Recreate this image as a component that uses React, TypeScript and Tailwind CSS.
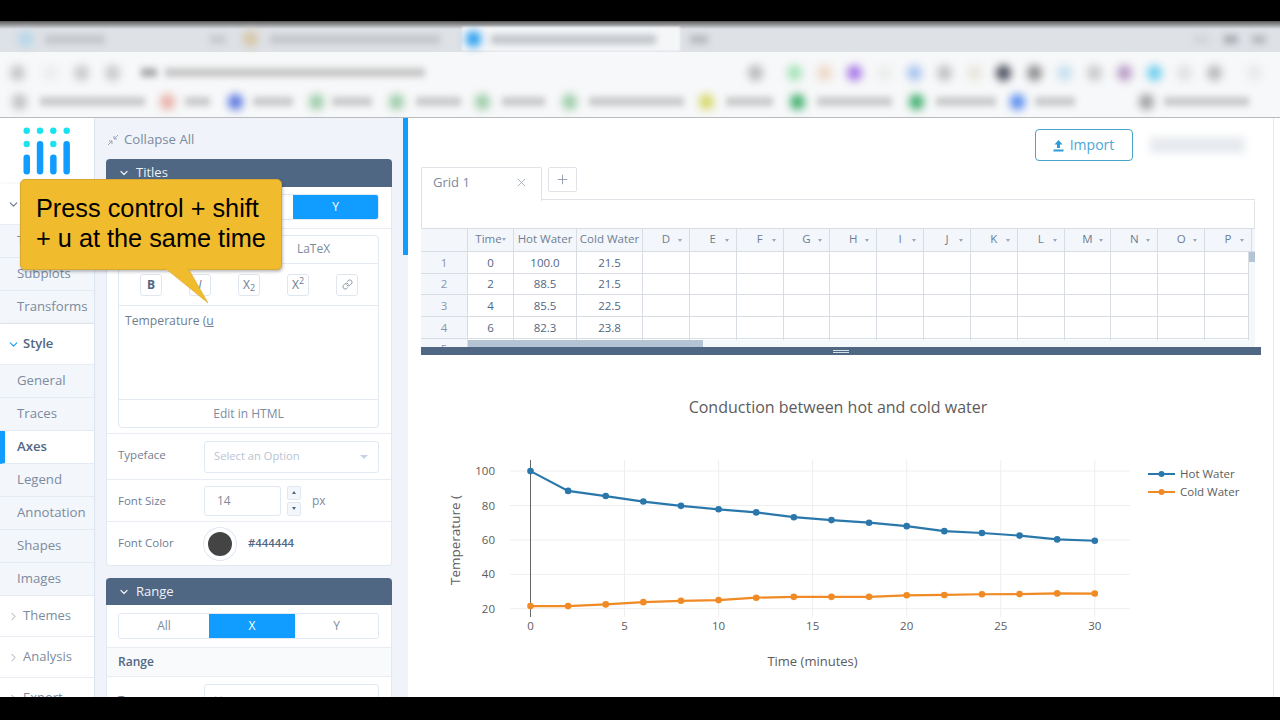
import React from "react";
import { ChevronDown, ChevronRight, Link as LinkIcon, X, Plus } from "lucide-react";

const Ic = ({ c }: { c: string }) => <div className={"h-[16px] w-[15px] shrink-0 rounded-full blur-[4px] " + c} />;
const Bar = ({ c }: { c: string }) => <div className={"h-[9px] shrink-0 blur-[3px] " + c} />;

function BrowserChrome() {
  return (
    <div className="relative flex h-[97px] shrink-0 flex-col border-b border-[#b9bbbe] bg-[#f7f8f9]">
      <div className="absolute left-0 right-0 top-0 h-[8px] bg-gradient-to-b from-[#5a5a5a] to-[#dee1e6]" />
      <div className="flex h-[31px] shrink-0 items-center bg-[#dee1e6] pt-[5px]">
        <Ic c="ml-[18px] bg-[#b5d6ea]" />
        <Bar c="ml-[12px] w-[60px] bg-[#c4c7cb]" />
        <Bar c="ml-[105px] w-[16px] bg-[#c8cbcf]" />
        <Ic c="ml-[17px] bg-[#d6c6a6]" />
        <Bar c="ml-[12px] w-[170px] bg-[#c4c7cb]" />
        <div className="ml-[22px] flex h-[24px] w-[218px] shrink-0 items-center bg-[#f4f6f8] blur-[1px]">
          <Ic c="ml-[4px] bg-[#1e9bf0]" />
          <Bar c="ml-[10px] w-[165px] bg-[#bfc2c6]" />
        </div>
        <Bar c="ml-[10px] w-[18px] bg-[#b9bcc0]" />
        <div className="flex-1" />
        <Bar c="w-[14px] bg-[#d2d5d9]" />
        <Bar c="ml-[16px] w-[14px] bg-[#adb1b5]" />
        <Bar c="ml-[14px] mr-[14px] w-[14px] bg-[#b9bcc0]" />
      </div>
      <div className="flex h-[34px] shrink-0 items-center pt-[7px]">
        <Ic c="ml-[10px] bg-[#c4c6c8]" />
        <Ic c="ml-[18px] bg-[#eceded]" />
        <Ic c="ml-[16px] bg-[#c8c9ca]" />
        <Ic c="ml-[16px] bg-[#c8c9ca]" />
        <Bar c="ml-[21px] w-[16px] bg-[#a9abad]" />
        <Bar c="ml-[8px] w-[260px] bg-[#c6c7c8]" />
        <div className="flex-1" />
        <Ic c="bg-[#b8b9ba]" />
        <Ic c="ml-[24px] bg-[#a5e3b8]" />
        <Ic c="ml-[15px] bg-[#ecd8c8]" />
        <Ic c="ml-[15px] bg-[#a878e8]" />
        <Ic c="ml-[15px] bg-[#ececec]" />
        <Ic c="ml-[15px] bg-[#a8c4ee]" />
        <Ic c="ml-[15px] bg-[#c0c1c2]" />
        <Ic c="ml-[15px] bg-[#e8e5dc]" />
        <Ic c="ml-[14px] bg-[#4a4f5e]" />
        <Ic c="ml-[16px] bg-[#8c8d8e]" />
        <Ic c="ml-[15px] bg-[#c5e0f0]" />
        <Ic c="ml-[15px] bg-[#c8c9ca]" />
        <Ic c="ml-[15px] bg-[#b89cc8]" />
        <Ic c="ml-[15px] bg-[#70d0ee]" />
        <Ic c="ml-[15px] bg-[#e0e1e2]" />
        <Ic c="ml-[15px] bg-[#b8b9ba]" />
        <Ic c="ml-[25px] mr-[18px] bg-[#e8e9ea]" />
      </div>
      <div className="flex flex-1 items-center">
        <Ic c="ml-[12px] bg-[#bfc0c1]" />
        <Bar c="ml-[13px] w-[105px] bg-[#c8c9ca]" />
        <Ic c="ml-[15px] bg-[#e8b0a8]" />
        <Bar c="ml-[10px] w-[25px] bg-[#c8c9ca]" />
        <Ic c="ml-[18px] bg-[#5a78e0]" />
        <Bar c="ml-[10px] w-[40px] bg-[#c8c9ca]" />
        <Ic c="ml-[16px] bg-[#9ccca8]" />
        <Bar c="ml-[8px] w-[40px] bg-[#c8c9ca]" />
        <Ic c="ml-[17px] bg-[#9ccca8]" />
        <Bar c="ml-[12px] w-[45px] bg-[#c8c9ca]" />
        <Ic c="ml-[14px] bg-[#9ccca8]" />
        <Bar c="ml-[12px] w-[43px] bg-[#c8c9ca]" />
        <Ic c="ml-[17px] bg-[#9ccca8]" />
        <Bar c="ml-[12px] w-[95px] bg-[#c8c9ca]" />
        <Ic c="ml-[15px] bg-[#d8d86c]" />
        <Bar c="ml-[12px] w-[47px] bg-[#c8c9ca]" />
        <Ic c="ml-[17px] bg-[#44b070]" />
        <Bar c="ml-[12px] w-[75px] bg-[#c8c9ca]" />
        <Ic c="ml-[17px] bg-[#44b070]" />
        <Bar c="ml-[12px] w-[60px] bg-[#c8c9ca]" />
        <Ic c="ml-[14px] bg-[#5a8cf0]" />
        <Bar c="ml-[10px] w-[40px] bg-[#c8c9ca]" />
        <Ic c="ml-[64px] bg-[#a0a1a3]" />
        <Bar c="ml-[10px] w-[85px] bg-[#c8c9ca]" />
      </div>
    </div>
  );
}

function Logo() {
  return (
    <svg width="94" height="66" viewBox="0 118 94 66" className="block shrink-0">
      {[26.7, 40, 53.3, 66.7].map((x) => (
        <circle key={x} cx={x} cy={130.7} r={3.2} fill="#19e3f3" />
      ))}
      <circle cx={26.7} cy={144} r={3.2} fill="#19e3f3" />
      <circle cx={53.3} cy={144} r={3.2} fill="#19e3f3" />
      <rect x={23.5} y={154.5} width={6.5} height={20} rx={3.2} fill="#119dff" />
      <rect x={36.8} y={141} width={6.5} height={33.5} rx={3.2} fill="#119dff" />
      <rect x={50.1} y={154.5} width={6.5} height={20} rx={3.2} fill="#119dff" />
      <rect x={63.4} y={141} width={6.5} height={33.5} rx={3.2} fill="#119dff" />
    </svg>
  );
}

const NavHead = ({ label, open, active }: { label: string; open?: boolean; active?: boolean }) => (
  <div className={"flex h-[41px] shrink-0 items-center border-b border-[#e8edf4] bg-white pl-[7px] " + (open ? "shadow-[0_1px_4px_rgba(80,103,132,0.18)]" : "")}>
    {open ? (
      <ChevronDown size={13} strokeWidth={2} className={active ? "text-[#119dff]" : "text-[#69738a]"} />
    ) : (
      <ChevronRight size={13} strokeWidth={1.5} className="text-[#8a97ab]" />
    )}
    <span className={"ml-[3px] text-[13px] " + (active ? "font-semibold text-[#506784]" : "text-[#7c8ba0]")}>{label}</span>
  </div>
);

const NavItem = ({ label, active }: { label: string; active?: boolean }) => (
  <div
    className={
      "flex h-[33px] shrink-0 items-center border-b border-[#e4ebf3] text-[13.2px] " +
      (active ? "border-l-[5px] border-l-[#119dff] bg-white pl-[12px] font-semibold text-[#506784]" : "bg-[#f3f6fa] pl-[17px] text-[#7c8ba0]")
    }
  >
    {label}
  </div>
);

function LeftNav() {
  return (
    <div className="flex w-[95px] shrink-0 flex-col overflow-hidden border-r border-[#dbe4ef] bg-white">
      <Logo />
      <NavHead label="Structure" open />
      <NavItem label="Traces" />
      <NavItem label="Subplots" />
      <NavItem label="Transforms" />
      <NavHead label="Style" open active />
      <NavItem label="General" />
      <NavItem label="Traces" />
      <NavItem label="Axes" active />
      <NavItem label="Legend" />
      <NavItem label="Annotation" />
      <NavItem label="Shapes" />
      <NavItem label="Images" />
      <NavHead label="Themes" />
      <NavHead label="Analysis" />
      <NavHead label="Export" />
    </div>
  );
}

const CardHead = ({ label, h }: { label: string; h: string }) => (
  <div className={"-mx-[1px] flex items-center rounded-t-[4px] bg-[#506784] pl-[12px] text-[13px] font-medium text-[#eef2f7] " + h}>
    <ChevronDown size={12} strokeWidth={2.5} className="text-[#e6ecf3]" />
    <span className="ml-[6px]">{label}</span>
  </div>
);

const Segments = ({ active, xw }: { active: "X" | "Y"; xw: string }) => {
  const on = "bg-[#119dff] font-medium text-white";
  const off = "bg-white text-[#7c8ba0]";
  return (
    <div className="flex h-[26px] w-[261px] overflow-hidden rounded-[3px] border border-[#dfe8f3] text-[12px]">
      <div className={"flex w-[90px] items-center justify-center " + off}>All</div>
      <div className={"flex items-center justify-center " + xw + " " + (active === "X" ? on : off)}>X</div>
      <div className={"flex flex-1 items-center justify-center " + (active === "Y" ? on : off)}>Y</div>
    </div>
  );
};

const ToolBtn = ({ children }: { children: React.ReactNode }) => (
  <div className="flex h-[22px] w-[22px] items-center justify-center rounded-[3px] border border-[#dfe6ef] bg-white text-[12px] text-[#6c7c92]">
    {children}
  </div>
);

const SelectBox = ({ text }: { text: string }) => (
  <div className="flex h-[32px] w-[175px] shrink-0 items-center justify-between rounded-[3px] border border-[#dfe8f3] bg-white pl-[9px] pr-[10px] text-[11.2px] text-[#b8c4d4]">
    <span>{text}</span>
    <span className="h-0 w-0 border-x-[4px] border-t-[4px] border-x-transparent border-t-[#c8d4e3]" />
  </div>
);

function Panel() {
  return (
    <div className="relative flex w-[308px] shrink-0 flex-col overflow-hidden bg-[#f0f4fa] pl-[11px]">
      <div className="flex h-[41px] shrink-0 items-center pl-[1px] pt-[2px] text-[13.2px] text-[#7c8ba0]">
        <svg width="12" height="12" viewBox="0 0 12 12" fill="none" stroke="#9aa5b5" strokeWidth="1">
          <path d="M1 11 L5 7 M2 7 H5 V10 M11 1 L7 5 M7 2 V5 H10" />
        </svg>
        <span className="ml-[5px]">Collapse All</span>
      </div>
      <div className="w-[286px] shrink-0 rounded-b-[4px] border-x border-b border-[#e2e9f2] bg-white">
        <CardHead label="Titles" h="h-[28px]" />
        <div className="h-[42px] border-b border-[#e8edf4] pl-[11px] pt-[7px]">
          <Segments active="Y" xw="w-[84px]" />
        </div>
        <div className="h-[205px] border-b border-[#e8edf4] pl-[11px] pt-[6px]">
          <div className="flex h-[193px] w-[261px] flex-col rounded-[4px] border border-[#dfe8f3]">
            <div className="flex h-[28px] shrink-0 border-b border-[#e4ebf3] text-[12px] text-[#7c8ba0]">
              <div className="flex w-[130px] items-center justify-center">Rich Text</div>
              <div className="flex flex-1 items-center justify-center pb-[2px]">LaTeX</div>
            </div>
            <div className="flex h-[42px] shrink-0 items-center gap-[27px] border-b border-[#e4ebf3] pl-[21px]">
              <ToolBtn><b className="text-[#506784]">B</b></ToolBtn>
              <ToolBtn><i>I</i></ToolBtn>
              <ToolBtn><span>X<sub className="text-[9px]">2</sub></span></ToolBtn>
              <ToolBtn><span>X<sup className="text-[9px]">2</sup></span></ToolBtn>
              <ToolBtn><LinkIcon size={11} strokeWidth={1.7} /></ToolBtn>
            </div>
            <div className="h-[94px] shrink-0 border-b border-[#e4ebf3] pl-[6px] pt-[7px] text-[12.2px] leading-[16px] text-[#6f7e93]">
              Temperature (<span className="underline">u</span>
            </div>
            <div className="flex flex-1 items-center justify-center text-[12px] text-[#7c8ba0]">Edit in HTML</div>
          </div>
        </div>
        <div className="flex h-[46px] items-center border-b border-[#e8edf4] pl-[11px] text-[11.5px] text-[#6f7e93]">
          <span className="w-[86px] pb-[4px]">Typeface</span>
          <SelectBox text="Select an Option" />
        </div>
        <div className="flex h-[42px] items-center border-b border-[#e8edf4] pl-[11px] text-[11.5px] text-[#6f7e93]">
          <span className="w-[86px]">Font Size</span>
          <div className="flex h-[30px] w-[77px] items-center rounded-[3px] border border-[#dfe8f3] pl-[12px] text-[12px] text-[#7c8ba0]">14</div>
          <div className="ml-[6px] flex flex-col gap-[2px]">
            <div className="flex h-[14px] w-[14px] items-center justify-center rounded-[2px] border border-[#dfe8f3] bg-[#f3f6fa]">
              <span className="h-0 w-0 border-x-[2.5px] border-b-[3px] border-x-transparent border-b-[#506784]" />
            </div>
            <div className="flex h-[14px] w-[14px] items-center justify-center rounded-[2px] border border-[#dfe8f3] bg-[#f3f6fa]">
              <span className="h-0 w-0 border-x-[2.5px] border-t-[3px] border-x-transparent border-t-[#506784]" />
            </div>
          </div>
          <span className="ml-[11px] text-[12px] text-[#7c8ba0]">px</span>
        </div>
        <div className="flex h-[43px] items-center pl-[11px] text-[11.5px] text-[#6f7e93]">
          <span className="w-[86px] pb-[2px]">Font Color</span>
          <div className="h-[32px] w-[32px] rounded-full border-[4px] border-white bg-[#444444] shadow-[0_0_0_1px_#dfe8f3]" />
          <span className="ml-[12px] text-[11.3px] font-semibold text-[#506784]">#444444</span>
        </div>
      </div>
      <div className="mt-[12px] w-[286px] shrink-0 border-x border-[#e2e9f2] bg-white">
        <CardHead label="Range" h="h-[27px]" />
        <div className="h-[43px] border-b border-[#e8edf4] pl-[11px] pt-[8px]">
          <Segments active="X" xw="w-[86px]" />
        </div>
        <div className="flex h-[29px] items-center border-b border-[#e8edf4] bg-[#f8fafc] pl-[11px] text-[12px] font-semibold text-[#506784]">Range</div>
        <div className="flex h-[46px] items-center pl-[11px] text-[11.5px] text-[#6f7e93]">
          <span className="w-[86px]">Type</span>
          <SelectBox text="Linear" />
        </div>
      </div>
    </div>
  );
}

const LETTERS = ["D", "E", "F", "G", "H", "I", "J", "K", "L", "M", "N", "O", "P"];
const ROWS = [
  ["1", "0", "100.0", "21.5"],
  ["2", "2", "88.5", "21.5"],
  ["3", "4", "85.5", "22.5"],
  ["4", "6", "82.3", "23.8"],
  ["5", "8", "79.8", "24.6"],
];

const Caret = () => <span className="h-0 w-0 border-x-[2.5px] border-t-[3px] border-x-transparent border-t-[#9aa8ba]" />;

function DataGrid() {
  return (
    <div className="relative h-[119px] w-[834px] overflow-hidden">
      <div className="flex h-[24px] border-y border-[#d8dde3] bg-[#f3f6fa] text-[11.5px] text-[#6f7e93]">
        <div className="h-full w-[47px] shrink-0 border-r border-[#d8dde3]" />
        <div className="flex h-full w-[46px] shrink-0 items-center justify-center border-r border-[#d8dde3] pb-[2px]">Time<Caret /></div>
        <div className="flex h-full w-[63px] shrink-0 items-center justify-center border-r border-[#d8dde3] pb-[2px]">Hot Water</div>
        <div className="flex h-full w-[66px] shrink-0 items-center justify-center border-r border-[#d8dde3] pb-[2px]">Cold Water</div>
        {LETTERS.map((l) => (
          <div key={l} className="relative flex h-full w-[46.85px] shrink-0 items-center justify-center border-r border-[#d8dde3] pb-[2px]">
            {l}
            <span className="absolute right-[7px] top-[10px] flex"><Caret /></span>
          </div>
        ))}
      </div>
      {ROWS.map((r) => (
        <div key={r[0]} className="flex h-[21.7px] text-[11.5px] text-[#506784]">
          <div className="flex h-full w-[47px] shrink-0 items-center justify-center border-b border-r border-[#d8dde3] bg-[#f3f6fa] text-[#8a97ab]">{r[0]}</div>
          <div className="flex h-full w-[46px] shrink-0 items-center justify-center border-b border-r border-[#d8dde3]">{r[1]}</div>
          <div className="flex h-full w-[63px] shrink-0 items-center justify-center border-b border-r border-[#d8dde3]">{r[2]}</div>
          <div className="flex h-full w-[66px] shrink-0 items-center justify-center border-b border-r border-[#d8dde3]">{r[3]}</div>
          {LETTERS.map((l) => (
            <div key={l} className="h-full w-[46.85px] shrink-0 border-b border-r border-[#d8dde3]" />
          ))}
        </div>
      ))}
      <div className="absolute bottom-0 left-[47px] right-0 h-[7px] bg-[#f5f8fb]">
        <div className="h-full w-[235px] bg-[#b5c4d5]" />
      </div>
      <div className="absolute bottom-[7px] right-0 top-[24px] w-[7px] border-l border-[#d8dde3] bg-[#f5f8fb]">
        <div className="h-[10px] w-full bg-[#b5c4d5]" />
      </div>
    </div>
  );
}

const HOT = [100, 88.5, 85.5, 82.3, 79.8, 77.8, 76, 73.2, 71.5, 70, 68, 65.1, 64, 62.5, 60.3, 59.5];
const COLD = [21.5, 21.5, 22.5, 23.8, 24.6, 25, 26.4, 26.9, 26.9, 26.9, 27.8, 28, 28.4, 28.5, 28.9, 28.8];
const px = (t: number) => 530.5 + t * 18.81;
const py = (v: number) => 608.7 - (v - 20) * 1.72;

function Series({ data, color }: { data: number[]; color: string }) {
  const pts = data.map((v, i) => `${px(i * 2)},${py(v)}`).join(" ");
  return (
    <g>
      <polyline points={pts} fill="none" stroke={color} strokeWidth={2.2} />
      {data.map((v, i) => (
        <circle key={i} cx={px(i * 2)} cy={py(v)} r={3.3} fill={color} />
      ))}
    </g>
  );
}

function Chart() {
  const text = "#5c5c5c";
  return (
    <svg width="865" height="342" viewBox="408 355 865 342" className="block" style={{ fontFamily: "'Open Sans', sans-serif" }}>
      <text x={838} y={412.5} textAnchor="middle" fontSize={16} fill={text}>Conduction between hot and cold water</text>
      {[5, 10, 15, 20, 25, 30].map((t) => (
        <line key={t} x1={px(t)} x2={px(t)} y1={460} y2={617} stroke="#eeeeee" />
      ))}
      {[20, 40, 60, 80, 100].map((v) => (
        <g key={v}>
          <line x1={510} x2={1130} y1={py(v)} y2={py(v)} stroke="#eeeeee" />
          <text x={495} y={py(v) + 4} textAnchor="end" fontSize={11.5} fill={text}>{v}</text>
        </g>
      ))}
      <line x1={530.5} x2={530.5} y1={460} y2={617} stroke="#666666" />
      {[0, 5, 10, 15, 20, 25, 30].map((t) => (
        <text key={t} x={px(t)} y={630} textAnchor="middle" fontSize={11.5} fill={text}>{t}</text>
      ))}
      <Series data={COLD} color="#f08a24" />
      <Series data={HOT} color="#2a78ab" />
      <text x={812.5} y={666} textAnchor="middle" fontSize={13} fill={text}>Time (minutes)</text>
      <text transform="translate(460 540) rotate(-90)" textAnchor="middle" fontSize={13.5} fill={text}>Temperature (</text>
      <line x1={1148} x2={1175} y1={474} y2={474} stroke="#2a78ab" strokeWidth={2} />
      <circle cx={1161.5} cy={474} r={3} fill="#2a78ab" />
      <text x={1180} y={478} fontSize={11.5} fill={text}>Hot Water</text>
      <line x1={1148} x2={1175} y1={492} y2={492} stroke="#f08a24" strokeWidth={2} />
      <circle cx={1161.5} cy={492} r={3} fill="#f08a24" />
      <text x={1180} y={496} fontSize={11.5} fill={text}>Cold Water</text>
    </svg>
  );
}

function RightPane() {
  return (
    <div className="flex w-[865px] shrink-0 flex-col overflow-hidden bg-white">
      <div className="flex h-[49px] shrink-0 justify-end pr-[28px] pt-[11px]">
        <div className="flex h-[32px] w-[98px] items-center justify-center rounded-[4px] border border-[#4aa3c8] pb-[2px] pr-[2px] text-[14px] text-[#4aa8d8]">
          <svg width="13" height="13" viewBox="0 0 13 13" fill="#2f9bd6" className="mr-[5px] mt-[2px]">
            <path d="M6.5 1 L10.5 5.5 H8 V9 H5 V5.5 H2.5 Z M1.5 10.5 H11.5 V12.5 H1.5 Z" />
          </svg>
          Import
        </div>
        <div className="ml-[17px] mt-[8px] h-[16px] w-[95px] bg-[#e6e9ee] blur-[4px]" />
      </div>
      <div className="ml-[13px] flex h-[34px] shrink-0 items-start">
        <div className="flex h-[34px] w-[121px] shrink-0 items-center justify-between rounded-t-[2px] border-x border-t border-[#dfe3e8] bg-white pb-[4px] pl-[11px] pr-[13px] text-[13px] text-[#7c8ba0]">
          <span>Grid 1</span>
          <X size={13} strokeWidth={1.3} className="text-[#8a97ab]" />
        </div>
        <div className="flex h-[33px] w-[713px] items-start border-b border-[#dfe3e8]">
          <div className="ml-[6px] flex h-[25px] w-[29px] items-center justify-center rounded-[2px] border border-[#dfe3e8] text-[#8a97ab]">
            <Plus size={15} strokeWidth={1.4} />
          </div>
        </div>
      </div>
      <div className="ml-[13px] h-[27px] w-[834px] shrink-0 border-x border-[#dfe3e8]" />
      <div className="ml-[13px] shrink-0">
        <DataGrid />
      </div>
      <div className="ml-[13px] flex h-[8px] w-[840px] shrink-0 flex-col items-center justify-center gap-[1px] bg-[#506784]">
        <div className="h-[1px] w-[16px] bg-[#d5dde7]" />
        <div className="h-[1px] w-[16px] bg-[#d5dde7]" />
      </div>
      <Chart />
    </div>
  );
}

function Callout() {
  return (
    <div className="absolute left-[20px] top-[179px] h-[91px] w-[262px]">
      <div className="h-full w-full rounded-[5px] border border-[#d9a830] bg-[#f1bb2e] pl-[15px] pt-[13px] font-['Liberation_Sans',Arial,sans-serif] text-[25.3px] leading-[30px] text-black shadow-[1px_2px_3px_rgba(0,0,0,0.25)]">
        Press control + shift
        <br />+ u at the same time
      </div>
      <svg width="50" height="40" viewBox="0 0 50 40" className="absolute left-[143px] top-[89px]">
        <path d="M2 0 L25 0 L45 35 Z" fill="#f1bb2e" stroke="#d9a830" strokeWidth="0.6" />
        <rect x="3" y="0" width="21" height="2" fill="#f1bb2e" />
      </svg>
    </div>
  );
}

export default function App() {
  return (
    <div className="relative flex h-[720px] w-[1280px] flex-col overflow-hidden bg-black font-['Open_Sans',sans-serif]">
      <div className="h-[21px] shrink-0 bg-black" />
      <BrowserChrome />
      <div className="flex h-[579px] shrink-0 bg-white">
        <LeftNav />
        <Panel />
        <div className="w-[5px] shrink-0 bg-[#f0f4fa]">
          <div className="h-[137px] w-full bg-[#119dff]" />
        </div>
        <RightPane />
        <div className="flex-1 border-l border-[#e4e7ec] bg-white" />
      </div>
      <div className="flex-1 bg-black" />
      <Callout />
    </div>
  );
}
